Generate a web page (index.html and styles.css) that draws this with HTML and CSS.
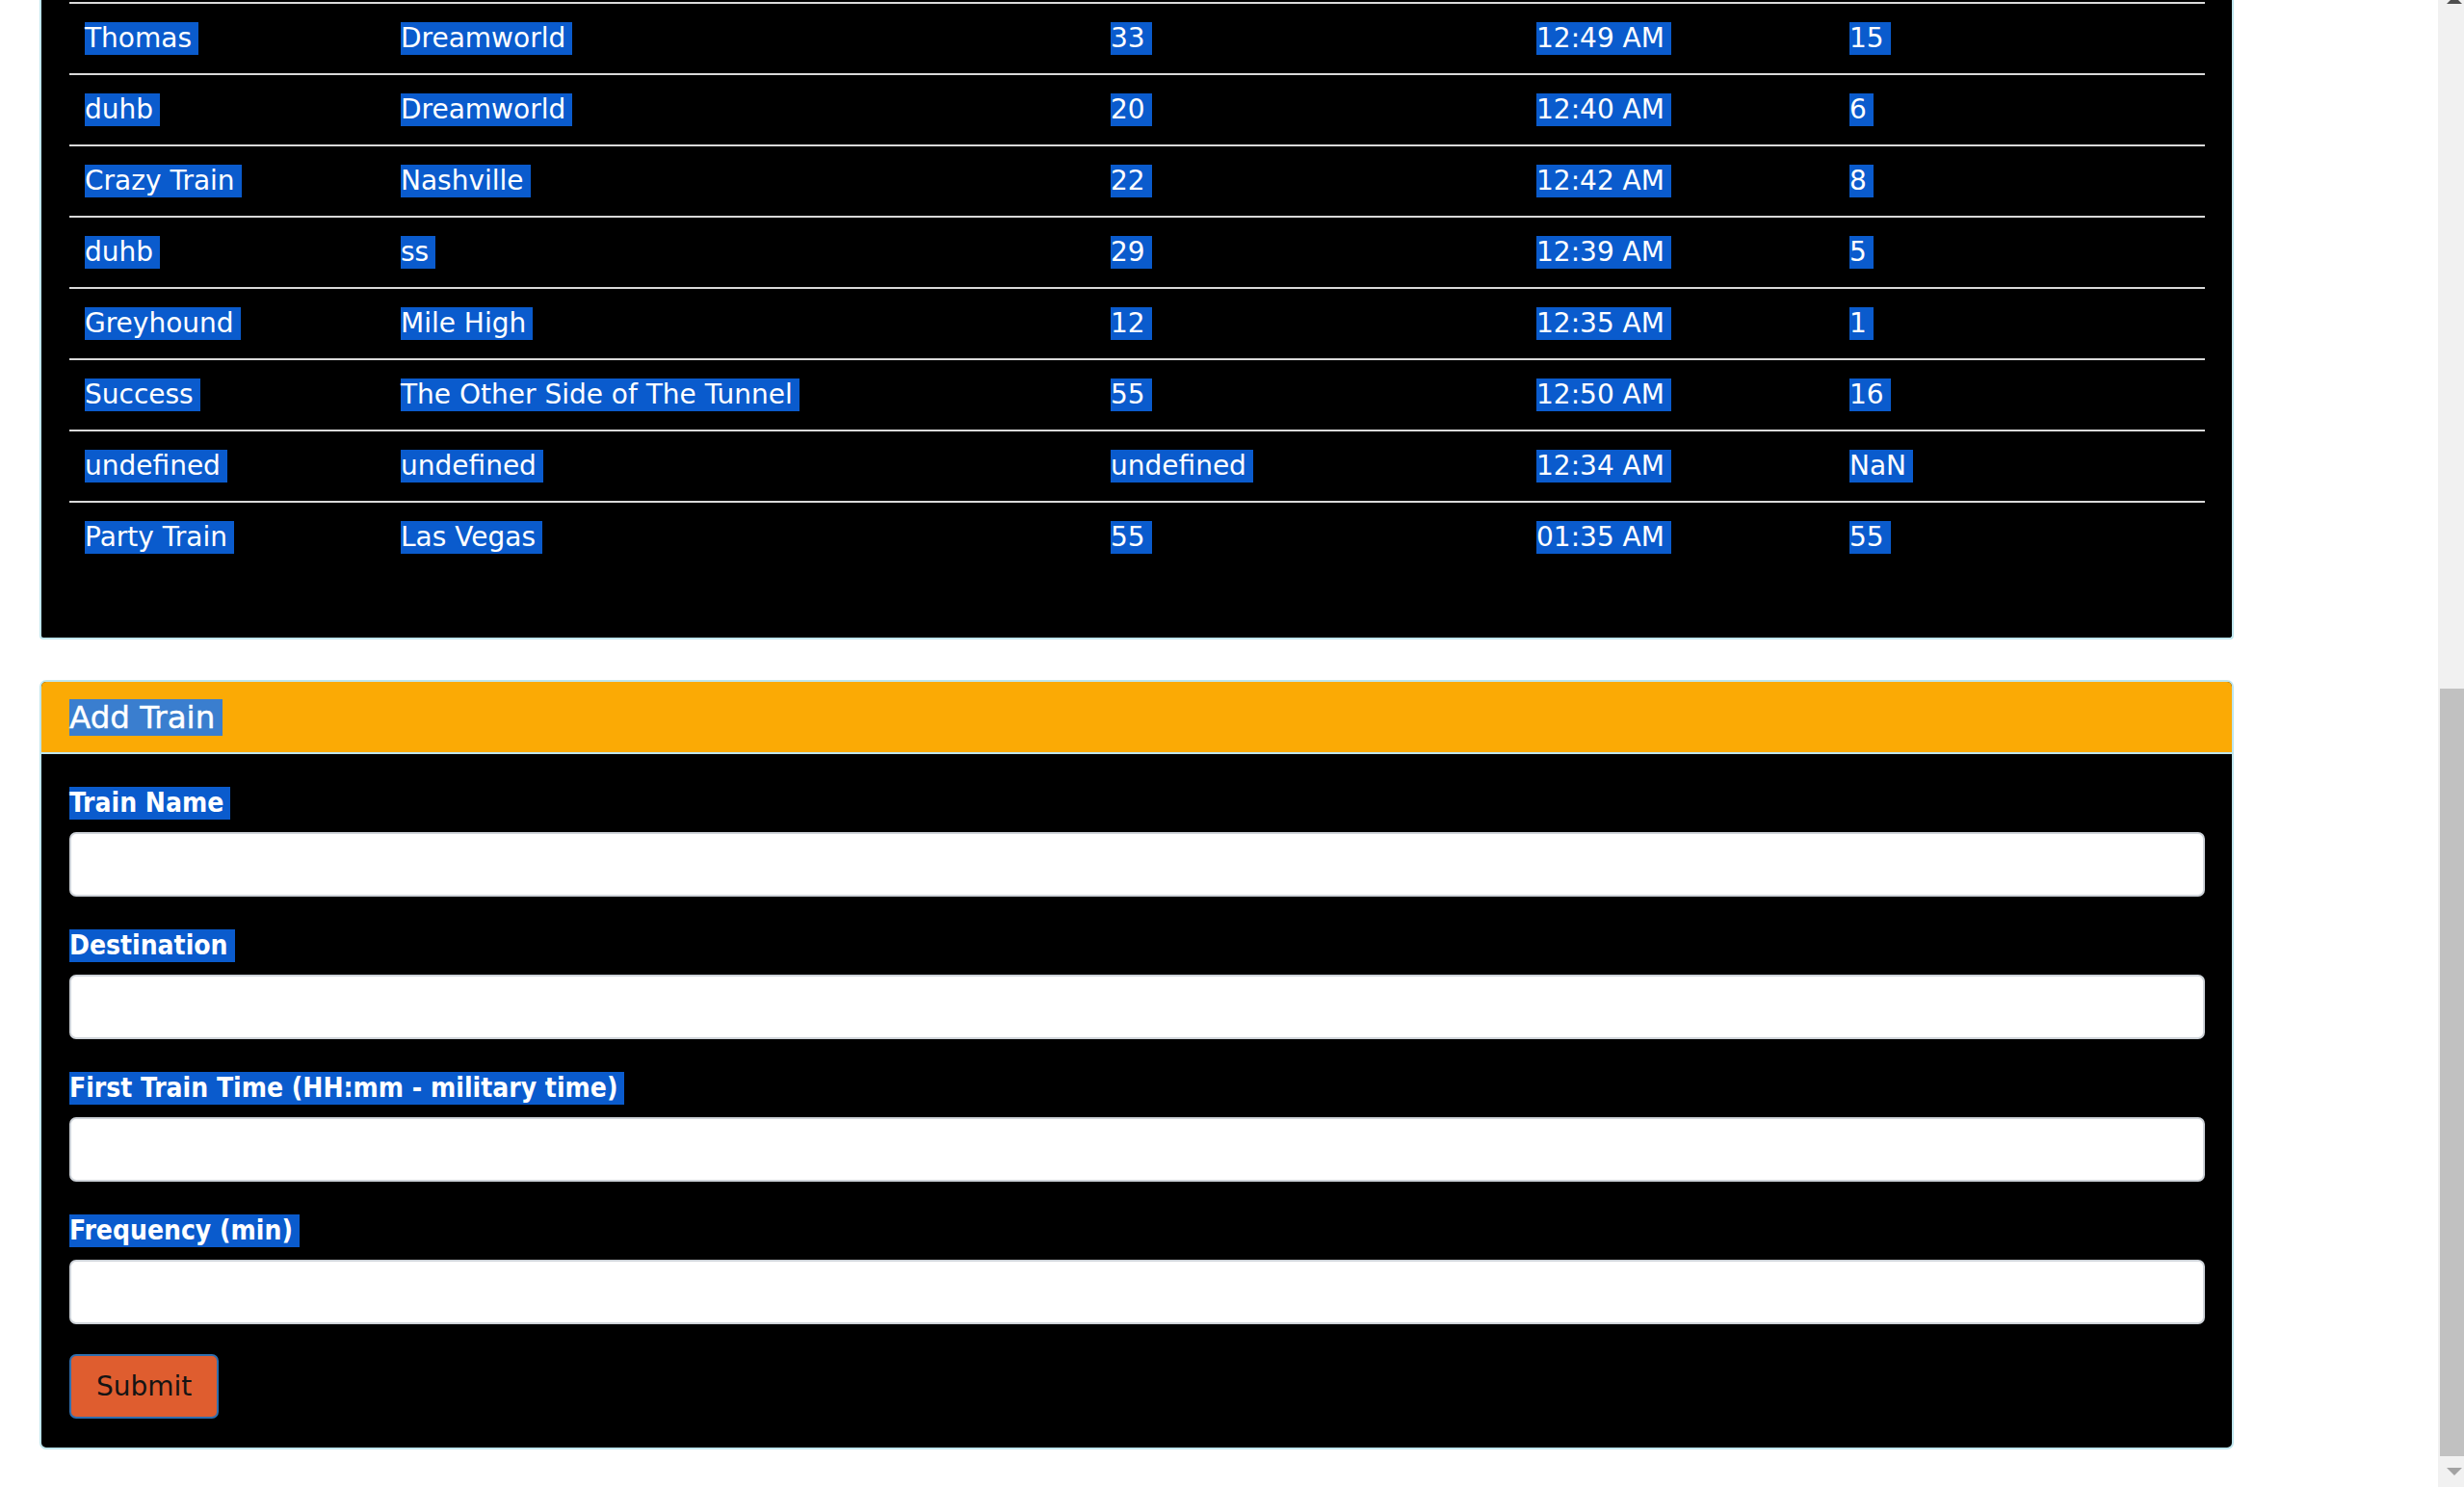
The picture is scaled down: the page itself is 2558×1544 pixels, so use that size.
FILE: index.html
```html
<!DOCTYPE html>
<html lang="en">
<head>
<meta charset="utf-8">
<title>Train Scheduler</title>
<link rel="stylesheet" href="styles.css">
</head>
<body>
<div class="page">
  <main class="content">
    <section class="card schedule">
      <table class="trains">
        <colgroup>
          <col class="c-name"><col class="c-dest"><col class="c-freq"><col class="c-next"><col class="c-away">
        </colgroup>
        <tbody>
          <tr><td><span class="sel">Thomas</span></td><td><span class="sel">Dreamworld</span></td><td><span class="sel">33</span></td><td><span class="sel">12:49 AM</span></td><td><span class="sel">15</span></td></tr>
          <tr><td><span class="sel">duhb</span></td><td><span class="sel">Dreamworld</span></td><td><span class="sel">20</span></td><td><span class="sel">12:40 AM</span></td><td><span class="sel">6</span></td></tr>
          <tr><td><span class="sel">Crazy Train</span></td><td><span class="sel">Nashville</span></td><td><span class="sel">22</span></td><td><span class="sel">12:42 AM</span></td><td><span class="sel">8</span></td></tr>
          <tr><td><span class="sel">duhb</span></td><td><span class="sel">ss</span></td><td><span class="sel">29</span></td><td><span class="sel">12:39 AM</span></td><td><span class="sel">5</span></td></tr>
          <tr><td><span class="sel">Greyhound</span></td><td><span class="sel">Mile High</span></td><td><span class="sel">12</span></td><td><span class="sel">12:35 AM</span></td><td><span class="sel">1</span></td></tr>
          <tr><td><span class="sel">Success</span></td><td><span class="sel">The Other Side of The Tunnel</span></td><td><span class="sel">55</span></td><td><span class="sel">12:50 AM</span></td><td><span class="sel">16</span></td></tr>
          <tr><td><span class="sel">undefined</span></td><td><span class="sel">undefined</span></td><td><span class="sel">undefined</span></td><td><span class="sel">12:34 AM</span></td><td><span class="sel">NaN</span></td></tr>
          <tr><td><span class="sel">Party Train</span></td><td><span class="sel">Las Vegas</span></td><td><span class="sel">55</span></td><td><span class="sel">01:35 AM</span></td><td><span class="sel">55</span></td></tr>
        </tbody>
      </table>
    </section>

    <section class="card add">
      <header class="card-header"><span class="sel sel-header">Add Train</span></header>
      <form class="card-body">
        <div class="group">
          <label class="label" for="name"><span class="sel">Train Name</span></label>
          <input class="input" id="name" type="text">
        </div>
        <div class="group">
          <label class="label" for="dest"><span class="sel">Destination</span></label>
          <input class="input" id="dest" type="text">
        </div>
        <div class="group">
          <label class="label" for="first"><span class="sel">First Train Time (HH:mm - military time)</span></label>
          <input class="input" id="first" type="text">
        </div>
        <div class="group last">
          <label class="label" for="freq"><span class="sel">Frequency (min)</span></label>
          <input class="input" id="freq" type="text">
        </div>
        <button class="submit" type="button">Submit</button>
      </form>
    </section>
  </main>

  <aside class="scrollbar">
    <div class="arrow-up"></div>
    <div class="thumb"></div>
    <div class="down-btn"><div class="arrow-down"></div></div>
  </aside>
</div>
</body>
</html>
```

FILE: styles.css
```css
html, body {
  margin: 0;
  padding: 0;
  background: #ffffff;
}

body {
  font-family: "DejaVu Sans", "Liberation Sans", sans-serif;
  font-size: 28px;
  color: #ffffff;
}

.page {
  display: flex;
  height: 1544px;
  overflow: hidden;
}

.content {
  flex: 1;
  padding-left: 41px;
}

.card {
  width: 2278px;
  box-sizing: border-box;
  background: #000000;
  border: 2px solid #bfe6ee;
}

.schedule {
  border-top: none;
  border-radius: 0 0 4px 4px;
  padding: 2px 28px 68px 29px;
}

.trains {
  width: 100%;
  border-collapse: collapse;
  table-layout: fixed;
}

.c-name { width: 328px; }
.c-dest { width: 737px; }
.c-freq { width: 442px; }
.c-next { width: 325px; }
.c-away { width: 385px; }

.trains tr {
  border-top: 2px solid #d9d9d9;
}

.trains td {
  height: 72px;
  padding: 0 0 0 16px;
  vertical-align: middle;
  white-space: nowrap;
}

.sel {
  display: inline-block;
  background: #0a5bcd;
  color: #ffffff;
  line-height: 34px;
  padding-right: 7px;
}

.add {
  margin-top: 42px;
  border-radius: 7px;
  overflow: hidden;
}

.card-header {
  background: #fbaa05;
  height: 73px;
  border-bottom: 2px solid #bfe6ee;
  display: flex;
  align-items: center;
  padding-left: 29px;
}

.sel-header {
  background: #3a7ecf;
  font-size: 32.5px;
  line-height: 38px;
  padding-right: 8px;
  -webkit-text-stroke: 0.4px #ffffff;
}

.card-body {
  display: flex;
  flex-direction: column;
  align-items: stretch;
  padding: 34px 28px 30px 29px;
}

.group {
  display: flex;
  flex-direction: column;
  align-items: flex-start;
  margin-bottom: 34px;
}

.group.last {
  margin-bottom: 31px;
}

.label {
  display: flex;
  font-family: "DejaVu Sans Condensed", "DejaVu Sans", sans-serif;
  font-stretch: condensed;
  font-weight: 700;
  margin-bottom: 13px;
}

.input {
  align-self: stretch;
  box-sizing: border-box;
  height: 67px;
  margin: 0;
  border: 2px solid #cfd4da;
  border-radius: 7px;
  background: #ffffff;
  font: inherit;
  padding: 0 21px;
}

.submit {
  align-self: flex-start;
  box-sizing: border-box;
  height: 67px;
  padding: 0 26px;
  margin: 0;
  background: #df5d2f;
  border: 2px solid #2f6eae;
  border-radius: 7px;
  color: #141414;
  font-family: "DejaVu Sans", sans-serif;
  font-size: 28px;
  line-height: 34px;
}

.scrollbar {
  width: 27px;
  flex: none;
  background: #f1f1f1;
  display: flex;
  flex-direction: column;
}

.arrow-up {
  width: 0;
  height: 0;
  margin: -4px 0 0 9px;
  border-left: 8px solid transparent;
  border-right: 8px solid transparent;
  border-bottom: 8px solid #505050;
}

.thumb {
  margin: 711px 0 0 2px;
  height: 797px;
  background: #c1c1c1;
}

.down-btn {
  flex: 1;
}

.arrow-down {
  width: 0;
  height: 0;
  margin: 12px 0 0 9px;
  border-left: 8px solid transparent;
  border-right: 8px solid transparent;
  border-top: 8px solid #a3a3a3;
}
```
